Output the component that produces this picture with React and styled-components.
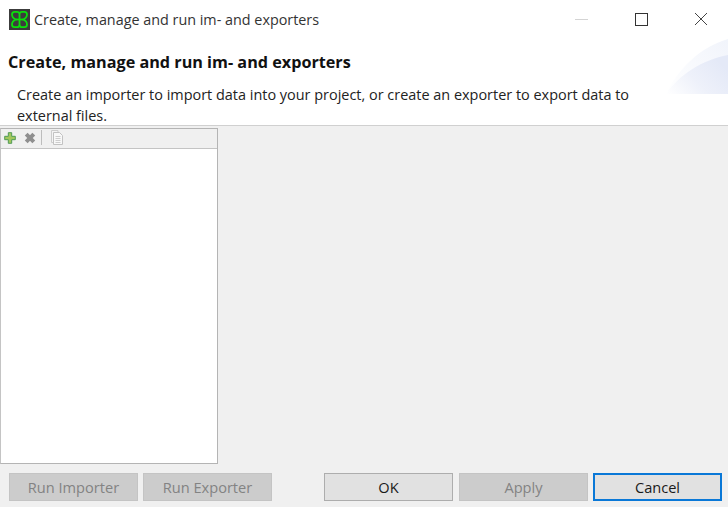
import React from "react";
import styled, { createGlobalStyle } from "styled-components";

const Global = createGlobalStyle`
  html, body { margin: 0; padding: 0; background: #f0f0f0; }
  #root { width: 728px; height: 507px; overflow: hidden; }
  * { box-sizing: border-box; }
`;

const Shell = styled.div`
  width: 728px;
  height: 507px;
  display: flex;
  flex-direction: column;
  background: #f0f0f0;
  font-family: "Open Sans", "Noto Sans", sans-serif;
  color: #1a1a1a;
`;

const TitleBar = styled.div`
  height: 38px;
  flex: none;
  display: flex;
  align-items: center;
  padding-left: 9px;
  background: #fff;
`;

const TitleText = styled.span`
  margin-left: 4px;
  font-size: 14.36px;
  color: #333;
  white-space: nowrap;
`;

const WindowControls = styled.div`
  margin-left: auto;
  margin-right: -3px;
  display: flex;
  align-items: center;
`;

const WindowButton = styled.div`
  width: 60px;
  height: 38px;
  display: flex;
  align-items: center;
  justify-content: center;
  svg { display: block; }
`;

const Banner = styled.div`
  position: relative;
  height: 88px;
  flex: none;
  background: #fff;
  border-bottom: 1px solid #d0d0d0;
  padding: 14px 8px 0;
`;

const BannerArt = styled.svg`
  position: absolute;
  right: 0;
  top: 1px;
`;

const Heading = styled.div`
  position: relative;
  font-size: 16.2px;
  font-weight: 700;
  line-height: 21px;
  color: #111;
`;

const Description = styled.div`
  position: relative;
  margin: 11px 0 0 9px;
  width: 640px;
  font-size: 14.45px;
  line-height: 21px;
  color: #222;
`;

const Body = styled.div`
  flex: 1;
  min-height: 0;
  display: flex;
  flex-direction: column;
  padding-top: 2px;
`;

const ListPanel = styled.div`
  width: 218px;
  height: 336px;
  flex: none;
  display: flex;
  flex-direction: column;
  border: 1px solid #b4b4b4;
  border-left-color: #c4c4c4;
  background: #fff;
`;

const Toolbar = styled.div`
  height: 20px;
  flex: none;
  display: flex;
  align-items: center;
  padding: 0 0 2px 3px;
  background: #f0f0f0;
  border-bottom: 1px solid #c4c4c4;
`;

const ToolIcon = styled.svg`
  display: block;
  flex: none;
  margin-right: ${(p) => p.$gap}px;
`;

const ToolSeparator = styled.div`
  width: 1px;
  height: 15px;
  flex: none;
  margin-right: 8px;
  background: #bdbdbd;
`;

const ButtonBar = styled.div`
  display: flex;
  align-items: flex-start;
  padding: 9px 7px 0 9px;
`;

const ActionButton = styled.div`
  width: 129px;
  height: 28px;
  flex: none;
  margin-left: ${(p) => p.$offset || 0}px;
  display: flex;
  align-items: center;
  justify-content: center;
  font-size: 14.6px;
  background: ${(p) => (p.$disabled ? "#cccccc" : "#e1e1e1")};
  color: ${(p) => (p.$disabled ? "#838383" : "#1a1a1a")};
  border: ${(p) =>
    p.$focused
      ? "2px solid #0a78d7"
      : p.$disabled
      ? "1px solid #c4c4c4"
      : "1px solid #adadad"};
`;

const AppIcon = () => (
  <svg width="21" height="21" viewBox="0 0 21 21" style={{ flex: "none" }}>
    <rect width="21" height="21" fill="#3c3c3c" />
    <g fill="none" stroke="#0be00b" strokeWidth="1.800">
      <path d="M10.500 6V5C10.500 3.500 9.500 2.800 8 2.800H5.500C3.800 2.800 3 4 3 5.500C3 7.500 4.500 9.500 7 10.500C4.500 11.500 3 13.500 3 15.500C3 17 3.800 18.200 5.500 18.200H8C9.500 18.200 10.500 17.500 10.500 16V5" />
      <path d="M10.500 5C10.500 3.500 11.500 2.800 13 2.800H15.500C17.200 2.800 18 4 18 5.500C18 7.500 16.500 9.500 14 10.500C16.500 11.500 18 13.500 18 15.500C18 17 17.200 18.200 15.500 18.200H13C11.500 18.200 10.500 17.500 10.500 16" />
      <path d="M7 10.500H14" />
    </g>
  </svg>
);

export default function App() {
  return (
    <Shell>
      <Global />
      <TitleBar>
        <AppIcon />
        <TitleText>Create, manage and run im- and exporters</TitleText>
        <WindowControls>
          <WindowButton>
            <svg width="13" height="1"><rect width="13" height="1" fill="#d4d4d4" /></svg>
          </WindowButton>
          <WindowButton>
            <svg width="13" height="13"><rect x="0.5" y="0.5" width="12" height="12" fill="none" stroke="#333" /></svg>
          </WindowButton>
          <WindowButton>
            <svg width="14" height="14"><path d="M1 1L13 13M13 1L1 13" stroke="#444" strokeWidth="1" fill="none" /></svg>
          </WindowButton>
        </WindowControls>
      </TitleBar>
      <Banner>
        <BannerArt width="62" height="55" viewBox="0 0 62 55">
          <defs>
            <linearGradient id="a" x1="0" y1="1" x2="1" y2="0.4">
              <stop offset="0" stopColor="#fff" />
              <stop offset="0.5" stopColor="#eef1fa" />
              <stop offset="1" stopColor="#e4e9f7" />
            </linearGradient>
            <linearGradient id="b" x1="0" y1="1" x2="1" y2="0">
              <stop offset="0" stopColor="#fff" />
              <stop offset="1" stopColor="#f1f4fb" />
            </linearGradient>
          </defs>
          <path d="M0 55C12 30 34 8 62 0V55Z" fill="url(#b)" />
          <path d="M0 55C14 35 36 21 62 16V55Z" fill="url(#a)" />
        </BannerArt>
        <Heading>Create, manage and run im- and exporters</Heading>
        <Description>
          Create an importer to import data into your project, or create an exporter to export data to external files.
        </Description>
      </Banner>
      <Body>
        <ListPanel>
          <Toolbar>
            <ToolIcon $gap={8} width="12" height="12" viewBox="0 0 12 12">
              <path d="M4.300 .7H7.700V4.300H11.300V7.700H7.700V11.300H4.300V7.700H.7V4.300H4.300Z" fill="#a3c75c" stroke="#4f9a55" strokeWidth="1" />
            </ToolIcon>
            <ToolIcon $gap={5} width="12" height="12" viewBox="0 0 12 12">
              <path d="M2.200 2.200L9.800 9.800M9.800 2.200L2.200 9.800" stroke="#8f8f8f" strokeWidth="4" fill="none" />
            </ToolIcon>
            <ToolSeparator />
            <ToolIcon $gap={0} width="14" height="15" viewBox="0 0 14 15">
              <path d="M1.500 .5H8V12.500H1.500Z" fill="#f4f4f4" stroke="#cdcdcd" />
              <path d="M3.500 2.500H9.500L12.500 5.500V14.500H3.500Z" fill="#f8f8f8" stroke="#c2c2c2" />
              <path d="M5.500 6.500H10.500M5.500 8.500H10.500M5.500 10.500H10.500M5.500 12.500H10.500" stroke="#cdcdcd" />
            </ToolIcon>
          </Toolbar>
        </ListPanel>
        <ButtonBar>
          <ActionButton $disabled>Run Importer</ActionButton>
          <ActionButton $disabled $offset={5}>Run Exporter</ActionButton>
          <ActionButton $offset={52}>OK</ActionButton>
          <ActionButton $disabled $offset={6}>Apply</ActionButton>
          <ActionButton $focused $offset={5}>Cancel</ActionButton>
        </ButtonBar>
      </Body>
    </Shell>
  );
}
